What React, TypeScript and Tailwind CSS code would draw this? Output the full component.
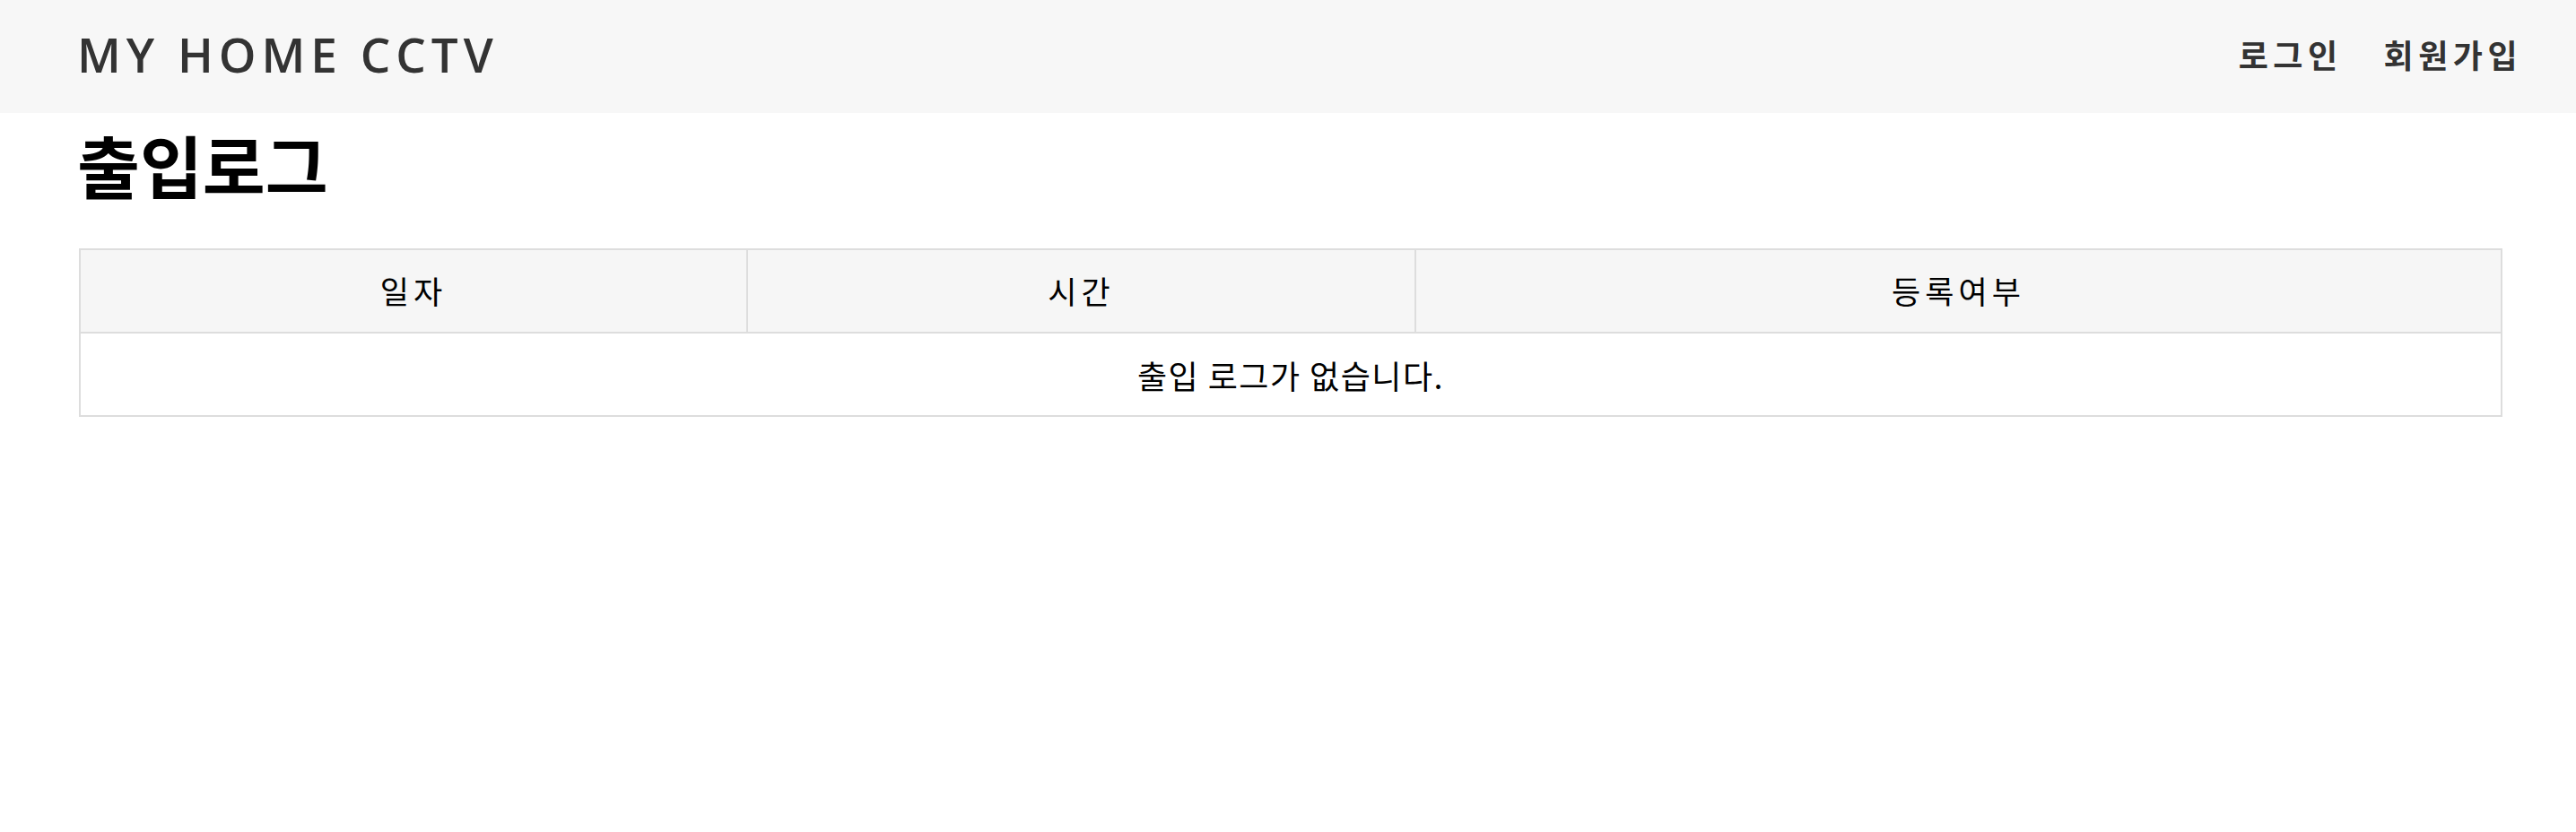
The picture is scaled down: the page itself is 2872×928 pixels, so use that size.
import React from "react";

const kr = { fontFamily: '"Noto Sans CJK KR", "Noto Sans", sans-serif' };

export default function App() {
  return (
    <div className="min-h-[928px] bg-white">
      <header className="h-[126px] bg-[#f7f7f7] flex items-center justify-between pl-[86px] pr-[60px] pb-[6px]">
        <div
          className="text-[53px] font-semibold tracking-[6px] text-[#333] leading-none"
          style={{ fontFamily: '"Open Sans", "Noto Sans CJK KR", sans-serif' }}
        >
          MY HOME CCTV
        </div>
        <nav className="flex items-center gap-[46px] text-[36px] font-bold tracking-[5.5px] text-[#333] leading-none" style={kr}>
          <a>로그인</a>
          <a>회원가입</a>
        </nav>
      </header>
      <main className="pl-[88px] pr-[82px]" style={kr}>
        <h1 className="text-[76px] font-bold text-black leading-[1.2] mt-[12px] -ml-[2px]">출입로그</h1>
        <table className="w-full mt-[48px] border-collapse border-2 border-[#dddddd] text-black">
          <thead>
            <tr className="bg-[#f6f6f6] h-[93px]">
              <th className="w-[744px] border-2 border-[#dddddd] font-normal text-[35px] tracking-[5px]">일자</th>
              <th className="w-[745px] border-2 border-[#dddddd] font-normal text-[35px] tracking-[5px]">시간</th>
              <th className="border-2 border-[#dddddd] font-normal text-[35px] tracking-[5px]">등록여부</th>
            </tr>
          </thead>
          <tbody>
            <tr className="h-[93px]">
              <td colSpan={3} className="border-2 border-[#dddddd] text-center text-[36px] tracking-[1.5px]">
                출입 로그가 없습니다.
              </td>
            </tr>
          </tbody>
        </table>
      </main>
    </div>
  );
}
